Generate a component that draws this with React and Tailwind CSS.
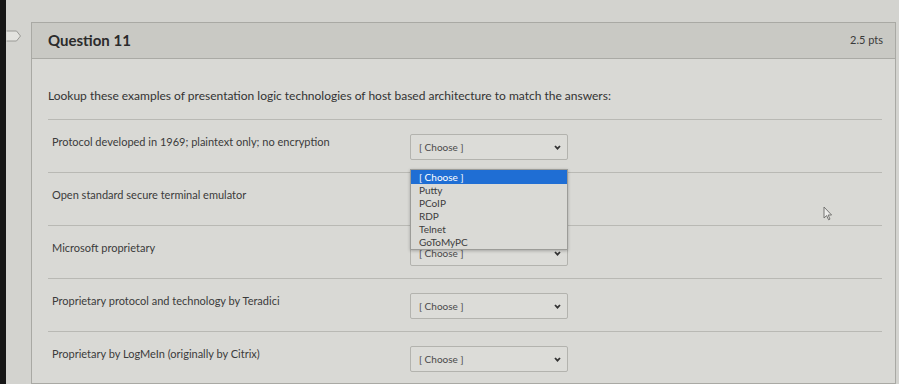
import { useState } from 'react';

const rows = [
  'Protocol developed in 1969; plaintext only; no encryption',
  'Open standard secure terminal emulator',
  'Microsoft proprietary',
  'Proprietary protocol and technology by Teradici',
  'Proprietary by LogMeIn (originally by Citrix)',
];

const options = ['Putty', 'PCoIP', 'RDP', 'Telnet', 'GoToMyPC'];

function Chevron() {
  return (
    <svg width="7" height="5" viewBox="0 0 7 5" className="text-[#333]">
      <path d="M1 1 L3.5 3.6 L6 1" fill="none" stroke="currentColor" strokeWidth="1.8" />
    </svg>
  );
}

function SelectBox({ open }) {
  return (
    <div className="relative self-start w-[158px] mt-[14px]">
      <div className="h-[26px] border border-[#b3b3ae] rounded-[2px] bg-[#dcdcd8] flex items-center justify-between pl-[8px] pr-[6px] text-[10px] text-[#4a4a4a]">
        <span>[ Choose ]</span>
        <Chevron />
      </div>
      {open && (
        <div className="absolute left-0 top-full mt-[9px] w-full z-10 bg-[#dadad6] border border-[#9c9c98] shadow-[0_1px_3px_rgba(0,0,0,0.25)] text-[10px] leading-[13px] text-[#3d3d3d]">
          <div className="bg-[#1f6ed4] text-white pl-[8px] h-[14px] leading-[14px]">[ Choose ]</div>
          {options.map(o => (
            <div key={o} className="pl-[8px]">{o}</div>
          ))}
        </div>
      )}
    </div>
  );
}

export default function App() {
  const [open] = useState(0);

  return (
    <div className="relative w-[899px] h-[384px] overflow-hidden flex bg-[#d3d3cf] font-['Lato','Liberation_Sans',sans-serif]">
      {/* dark screen edge */}
      <div className="w-[6px] bg-[#161616]" />
      <div className="w-[25px] pt-[30px]">
        <svg width="16" height="12" viewBox="0 0 16 12">
          <path d="M0.5 1 H10.5 L14.5 6 L10.5 11 H0.5" fill="#e3e3df" stroke="#9a9a96" strokeWidth="1" />
        </svg>
      </div>

      {/* question card */}
      <div className="flex-1 mt-[22px] mr-[3px] border border-[#a9a9a4] flex flex-col bg-[#d9d9d5]">
        <div className="h-[36px] shrink-0 bg-[#c9c9c4] border-b border-[#aaaaa5] flex items-center justify-between pl-[16px] pr-[12px]">
          <h2 className="text-[15px] font-bold text-[#2b2b2b]">Question 11</h2>
          <span className="text-[11px] text-[#3a3a3a]">2.5 pts</span>
        </div>

        <div className="pl-[16px] pr-[13px]">
          <p className="pt-[29px] pb-[15px] text-[12px] leading-[16px] text-[#333]">
            Lookup these examples of presentation logic technologies of host based architecture to match the answers:
          </p>

          {rows.map((r, i) => (
            <div key={i} className="h-[53px] border-t border-[#b9b9b4] flex pl-[4px]">
              <div className="w-[358px] mt-[15px] text-[11px] leading-[14px] text-[#3b3b3b]">{r}</div>
              <SelectBox open={open === i} />
            </div>
          ))}
        </div>
      </div>

      {/* mouse pointer */}
      <svg className="absolute left-[823px] top-[206px]" width="10" height="15" viewBox="0 0 10 15">
        <path d="M1 1 L1 12 L3.6 9.6 L5.6 13.8 L7 13.1 L5.1 9 L8.6 9 Z" fill="#ececea" stroke="#6a6a68" strokeWidth="0.9" strokeLinejoin="round" />
      </svg>
    </div>
  );
}
